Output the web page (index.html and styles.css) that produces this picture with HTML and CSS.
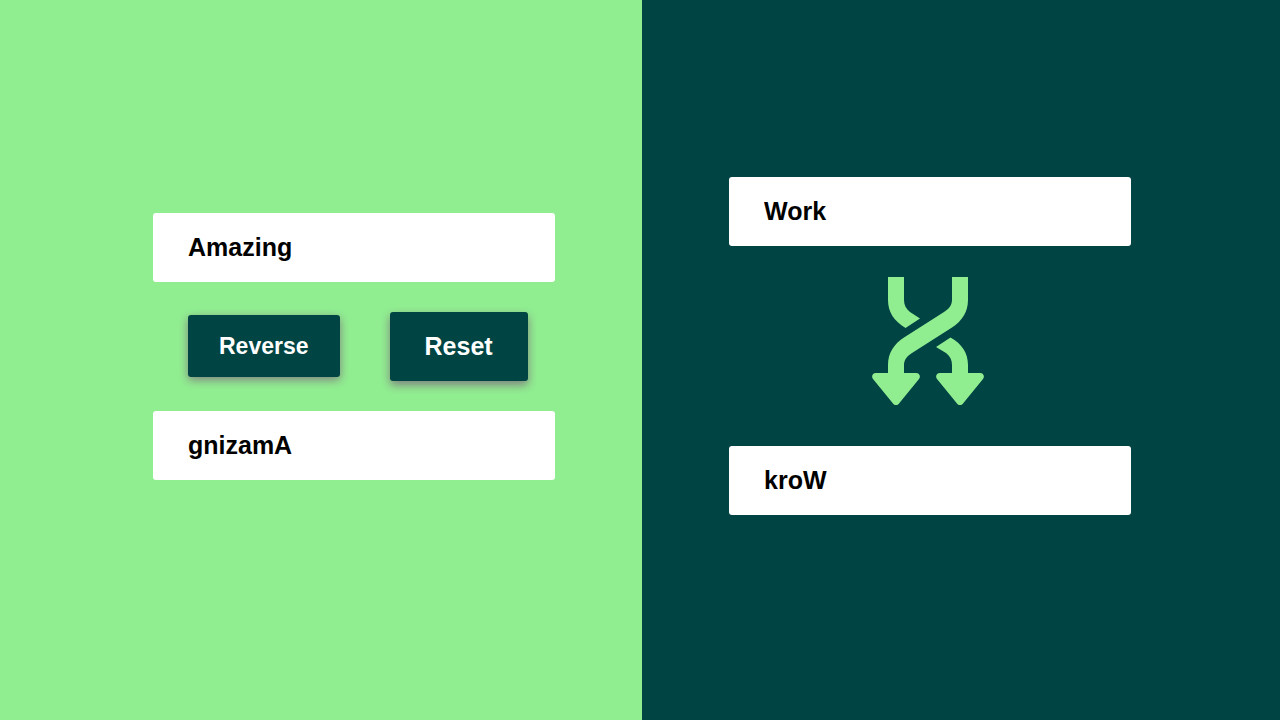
FILE: index.html
```html
<!DOCTYPE html>
<html lang="en">
<head>
<meta charset="UTF-8">
<meta name="viewport" content="width=device-width, initial-scale=1.0">
<title>Reverse Text</title>
<link rel="stylesheet" href="styles.css">
</head>
<body>
<main class="container">
    <section class="panel panel-light">
        <div class="box">
            <input class="field" id="word" type="text" value="Amazing" aria-label="Text to reverse">
            <div class="buttons">
                <button class="button pressed" type="button" onclick="reverseWord()">Reverse</button>
                <button class="button" type="button" onclick="resetWord()">Reset</button>
            </div>
            <input class="field" id="result" type="text" value="gnizamA" aria-label="Reversed text" readonly>
        </div>
    </section>
    <section class="panel panel-dark">
        <div class="box">
            <input class="field" id="liveWord" type="text" value="Work" aria-label="Text to reverse while typing" oninput="reverseLive()">
            <svg class="arrows" viewBox="0 0 116 128" aria-hidden="true">
                <path d="M16 0H32V23C32 28 34 32 38 35L48 41.5L33.5 51C22 44 16 35 16 23Z"/>
                <path d="M80 0H96V23C96 35 90 44 80 50.5L40 76C35 79 32 83 32 88V96H44C47.500 96 49 99.500 47 102L27 126.500C25.500 128.500 22.500 128.500 21 126.500L1 102C-1 99.500 0.500 96 4 96H16V88C16 76 22 67 32 60.500L72 35C77 32 80 28 80 23Z"/>
                <path d="M64 70L78.500 60.500C90 67 96 76 96 88V96H108C111.500 96 113 99.500 111 102L91 126.500C89.500 128.500 86.500 128.500 85 126.500L65 102C63 99.500 64.500 96 68 96H80V88C80 83 78 79 74 76Z"/>
            </svg>
            <input class="field" id="liveResult" type="text" value="kroW" aria-label="Live reversed text" readonly>
        </div>
    </section>
</main>
<script>
    const word = document.getElementById('word');
    const result = document.getElementById('result');
    const liveWord = document.getElementById('liveWord');
    const liveResult = document.getElementById('liveResult');

    function reverseText(text) {
        return text.split('').reverse().join('');
    }

    function reverseWord() {
        result.value = reverseText(word.value);
    }

    function resetWord() {
        word.value = '';
        result.value = '';
    }

    function reverseLive() {
        liveResult.value = reverseText(liveWord.value);
    }
</script>
</body>
</html>
```
FILE: styles.css
```css
* {
    box-sizing: border-box;
}
body {
    margin: 0;
    font-family: Arial, "Liberation Sans", sans-serif;
}
.container {
    display: grid;
    grid-template-columns: calc(50% + 2px) 1fr;
    min-height: 100vh;
}
.panel {
    display: flex;
    align-items: center;
    padding: 0 87px 28px;
}
.panel-light {
    justify-content: flex-end;
    background-color: lightgreen;
}
.panel-dark {
    background-color: #004444;
}
.box {
    width: 100%;
    max-width: 402px;
    display: flex;
    flex-direction: column;
    gap: 30px;
}
.field {
    width: 100%;
    height: 69px;
    padding: 20px 35px;
    border: none;
    border-radius: 3px;
    outline: none;
    background-color: #fff;
    color: #000;
    font-family: inherit;
    font-size: 25px;
    font-weight: bold;
}
.buttons {
    display: flex;
    align-items: center;
    gap: 50px;
    padding-left: 35px;
}
.button {
    padding: 20px 35px;
    border: none;
    border-radius: 3px;
    background-color: #004444;
    color: #fff;
    font-family: inherit;
    font-size: 25px;
    font-weight: bold;
    line-height: 29px;
    cursor: pointer;
    box-shadow: 0 4px 10px gray;
}
.button.pressed,
.button:active {
    padding: 18px 31px;
    font-size: 23px;
    line-height: 26px;
    box-shadow: 0 3px 10px gray;
}
.arrows {
    width: 116px;
    height: 128px;
    margin: 1px 0 11px;
    align-self: center;
    fill: lightgreen;
}
```
